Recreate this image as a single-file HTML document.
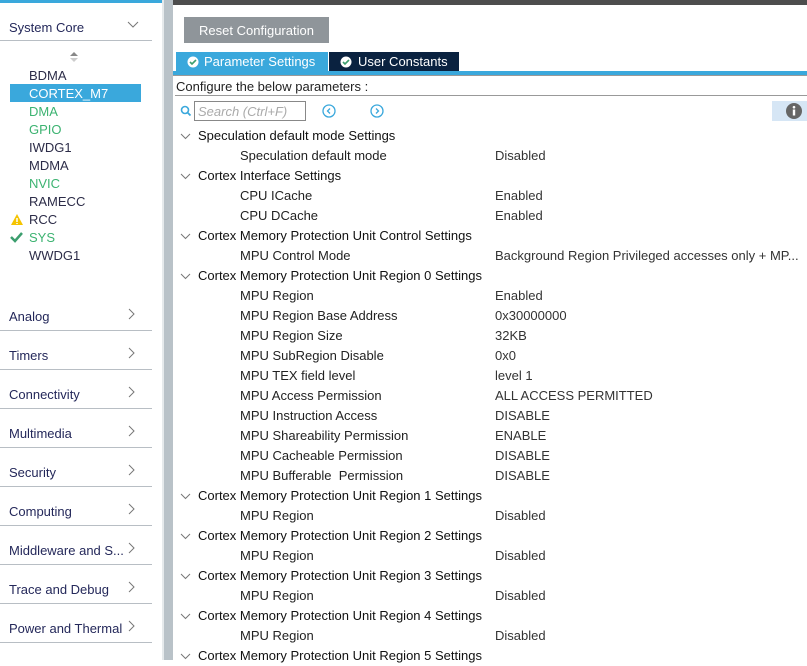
<!DOCTYPE html>
<html><head><style>
*{margin:0;padding:0;box-sizing:border-box}
body{width:807px;height:660px;overflow:hidden;background:#fff;font-family:"Liberation Sans",sans-serif;position:relative;font-size:13px;color:#1a1a1a}
.a{position:absolute;white-space:nowrap}
.cat{position:absolute;left:9px;font-size:13px;color:#24285a}
.ln{position:absolute;left:0;width:152px;height:1px;background:#b8bec4}
.it{position:absolute;left:29px;font-size:13px;color:#2c2c48;line-height:18px}
.g{color:#3cb371}
.r{position:absolute;height:20px;line-height:20px;font-size:13px;color:#111}
</style></head><body>
<div class="a" style="left:0;top:0;width:163px;height:3px;background:#3aa8dc"></div>
<div class="a" style="left:162px;top:0;width:2px;height:660px;background:#e6eaec"></div>
<div class="a" style="left:164px;top:0;width:9px;height:660px;background:#b9c2c8"></div>
<div class="a" style="left:173px;top:0;width:634px;height:5px;background:#4d4d4d"></div>

<div class="cat" style="top:20px">System Core</div>
<svg class="a" style="left:127px;top:21px" width="12" height="8"><path d="M1 1l5 5 5-5" stroke="#777" fill="none"/></svg>
<div class="ln" style="top:40px"></div>
<svg class="a" style="left:70px;top:51px" width="8" height="12"><path d="M0 5l4-4 4 4z" fill="#888"/><path d="M0 7l4 4 4-4z" fill="#ccc"/></svg>
<div class="a" style="left:10px;top:84px;width:131px;height:18px;background:#3aa8dc"></div>
<div class="it" style="top:67px">BDMA</div>
<div class="it" style="top:85px;color:#fff">CORTEX_M7</div>
<div class="it g" style="top:103px">DMA</div>
<div class="it g" style="top:121px">GPIO</div>
<div class="it" style="top:139px">IWDG1</div>
<div class="it" style="top:157px">MDMA</div>
<div class="it g" style="top:175px">NVIC</div>
<div class="it" style="top:193px">RAMECC</div>
<div class="it" style="top:211px">RCC</div>
<div class="it g" style="top:229px">SYS</div>
<div class="it" style="top:247px">WWDG1</div>
<svg class="a" style="left:10px;top:213px" width="14" height="13"><path d="M7 1L13 12H1z" fill="#f5c400"/><path d="M7 5v4M7 10v1" stroke="#fff" stroke-width="1.5"/></svg>
<svg class="a" style="left:10px;top:232px" width="13" height="11"><path d="M1 5l4 4 7-8" stroke="#3c9e6e" stroke-width="2.5" fill="none"/></svg>

<div class="cat" style="top:309px">Analog</div><div class="ln" style="top:330px"></div>
<div class="cat" style="top:348px">Timers</div><div class="ln" style="top:369px"></div>
<div class="cat" style="top:387px">Connectivity</div><div class="ln" style="top:408px"></div>
<div class="cat" style="top:426px">Multimedia</div><div class="ln" style="top:447px"></div>
<div class="cat" style="top:465px">Security</div><div class="ln" style="top:486px"></div>
<div class="cat" style="top:504px">Computing</div><div class="ln" style="top:525px"></div>
<div class="cat" style="top:543px">Middleware and S...</div><div class="ln" style="top:564px"></div>
<div class="cat" style="top:582px">Trace and Debug</div><div class="ln" style="top:603px"></div>
<div class="cat" style="top:621px">Power and Thermal</div><div class="ln" style="top:642px"></div>
<svg class="a" style="left:128px;top:308px" width="8" height="340">
<g stroke="#777" fill="none"><path d="M1 1l5 5-5 5"/><path d="M1 40l5 5-5 5"/><path d="M1 79l5 5-5 5"/><path d="M1 118l5 5-5 5"/><path d="M1 157l5 5-5 5"/><path d="M1 196l5 5-5 5"/><path d="M1 235l5 5-5 5"/><path d="M1 274l5 5-5 5"/><path d="M1 313l5 5-5 5"/></g></svg>

<div class="a" style="left:184px;top:17px;width:145px;height:26px;background:#8f959a;color:#fff;font-size:13px;line-height:27px;text-align:center">Reset Configuration</div>
<div class="a" style="left:176px;top:52px;width:152px;height:20px;background:#3aa8dc;color:#fff;line-height:20px;padding-left:28px">Parameter Settings</div>
<div class="a" style="left:329px;top:52px;width:130px;height:20px;background:#0a2240;color:#fff;line-height:20px;padding-left:29px">User Constants</div>
<svg class="a" style="left:187px;top:56px" width="12" height="12"><circle cx="6" cy="6" r="5.5" fill="#fff"/><path d="M3 6l2 2 4-4" stroke="#3c9e6e" stroke-width="1.6" fill="none"/></svg>
<svg class="a" style="left:340px;top:56px" width="12" height="12"><circle cx="6" cy="6" r="5.5" fill="#fff"/><path d="M3 6l2 2 4-4" stroke="#3c9e6e" stroke-width="1.6" fill="none"/></svg>
<div class="a" style="left:173px;top:71px;width:634px;height:4px;background:#3aa8dc"></div>
<div class="a" style="left:173px;top:75px;width:634px;height:1px;background:#999"></div>
<div class="a" style="left:176px;top:78px;color:#222;line-height:18px">Configure the below parameters :</div>
<div class="a" style="left:175px;top:95px;width:632px;height:1px;background:#999"></div>
<svg class="a" style="left:180px;top:105px" width="12" height="12"><circle cx="5" cy="5" r="3.5" stroke="#3aa8dc" stroke-width="1.6" fill="none"/><path d="M7.5 7.5l3 3" stroke="#3aa8dc" stroke-width="1.8"/></svg>
<div class="a" style="left:194px;top:101px;width:112px;height:20px;border:1px solid #888;color:#aaa;font-style:italic;line-height:19px;padding-left:3px">Search (Ctrl+F)</div>
<svg class="a" style="left:322px;top:104px" width="14" height="14"><circle cx="7" cy="7" r="6" stroke="#3aa8dc" fill="none" stroke-width="1.3"/><path d="M8 4.5L5.5 7 8 9.5" stroke="#3aa8dc" fill="none" stroke-width="1.3"/></svg>
<svg class="a" style="left:370px;top:104px" width="14" height="14"><circle cx="7" cy="7" r="6" stroke="#3aa8dc" fill="none" stroke-width="1.3"/><path d="M6 4.5L8.5 7 6 9.5" stroke="#3aa8dc" fill="none" stroke-width="1.3"/></svg>
<div class="a" style="left:772px;top:101px;width:35px;height:20px;background:#d6e6f5"></div>
<svg class="a" style="left:786px;top:103px" width="16" height="16"><circle cx="8" cy="8" r="8" fill="#666"/><rect x="6.8" y="6.5" width="2.4" height="6" fill="#fff"/><circle cx="8" cy="4.2" r="1.3" fill="#fff"/></svg>

<div id="tree"></div>
<script>
const rows=[
[0,"Speculation default mode Settings"],[1,"Speculation default mode","Disabled"],
[0,"Cortex Interface Settings"],[1,"CPU ICache","Enabled"],[1,"CPU DCache","Enabled"],
[0,"Cortex Memory Protection Unit Control Settings"],[1,"MPU Control Mode","Background Region Privileged accesses only + MP..."],
[0,"Cortex Memory Protection Unit Region 0 Settings"],[1,"MPU Region","Enabled"],[1,"MPU Region Base Address","0x30000000"],[1,"MPU Region Size","32KB"],[1,"MPU SubRegion Disable","0x0"],[1,"MPU TEX field level","level 1"],[1,"MPU Access Permission","ALL ACCESS PERMITTED"],[1,"MPU Instruction Access","DISABLE"],[1,"MPU Shareability Permission","ENABLE"],[1,"MPU Cacheable Permission","DISABLE"],[1,"MPU Bufferable&nbsp; Permission","DISABLE"],
[0,"Cortex Memory Protection Unit Region 1 Settings"],[1,"MPU Region","Disabled"],
[0,"Cortex Memory Protection Unit Region 2 Settings"],[1,"MPU Region","Disabled"],
[0,"Cortex Memory Protection Unit Region 3 Settings"],[1,"MPU Region","Disabled"],
[0,"Cortex Memory Protection Unit Region 4 Settings"],[1,"MPU Region","Disabled"],
[0,"Cortex Memory Protection Unit Region 5 Settings"]];
let h="";rows.forEach((r,i)=>{const t=126+i*20;
if(r[0]==0){h+=`<svg class="a" style="left:180px;top:${t+7}px" width="11" height="7"><path d="M1 1l4.5 4.5L10 1" stroke="#777" fill="none"/></svg><div class="r" style="left:198px;top:${t}px">${r[1]}</div>`}
else{h+=`<div class="r" style="left:240px;top:${t}px;color:#222">${r[1]}</div><div class="r" style="left:495px;top:${t}px;color:#333">${r[2]}</div>`}});
document.getElementById("tree").innerHTML=h;
</script>
</body></html>
